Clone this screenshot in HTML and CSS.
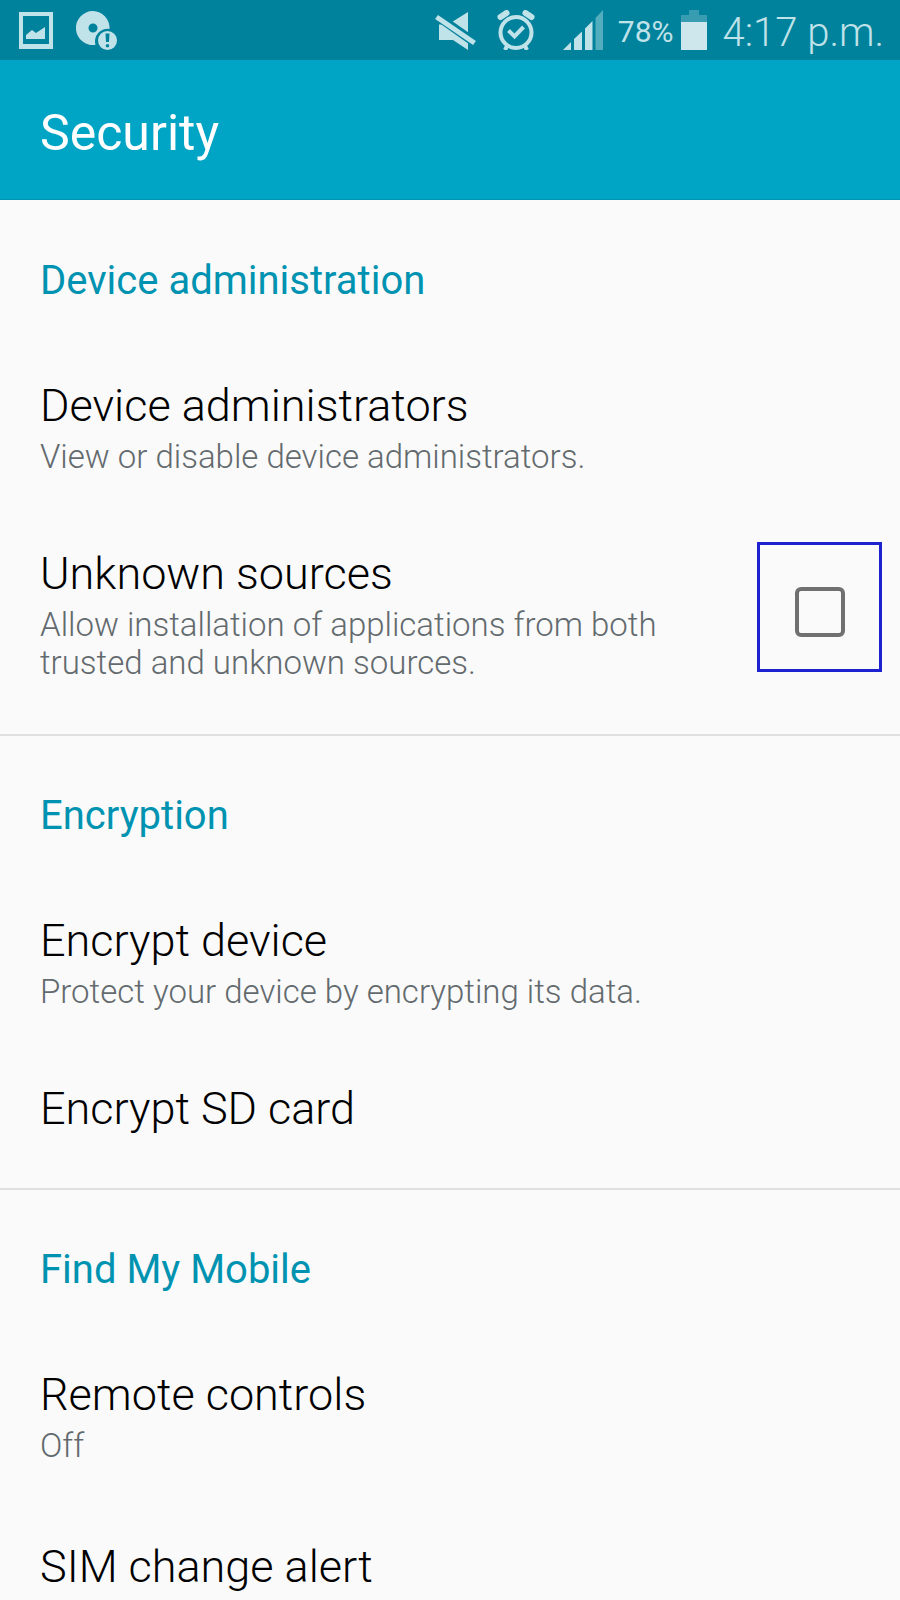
FILE: index.html
```html
<!DOCTYPE html>
<html lang="en">
<head>
<meta charset="utf-8">
<meta name="viewport" content="width=device-width, initial-scale=1">
<title>Security</title>
<link rel="stylesheet" href="styles.css">
</head>
<body>
<div class="status-bar">
  <div class="status-group notifications">
    <svg class="icon" width="34" height="38" viewBox="0 0 34 38" aria-hidden="true">
      <path fill-rule="evenodd" d="M0 1H34V38H0ZM4 5V33H30V5Z"/>
      <path d="M7 28V24L13 19L17 22L26 16V28Z"/>
    </svg>
    <svg class="icon" width="42" height="40" viewBox="0 0 42 40" aria-hidden="true">
      <path fill-rule="evenodd" d="M17 1A17 17 0 0 1 33.500 19A12.500 12.500 0 0 0 19.500 34.800A17 17 0 1 1 17 1ZM17 13.500A4.500 4.500 0 1 0 17 22.500A4.500 4.500 0 1 0 17 13.500Z"/>
      <path fill-rule="evenodd" d="M31.500 21A9.500 9.500 0 1 1 31.500 40A9.500 9.500 0 1 1 31.500 21ZM29.500 23.500L30 32H33L33.500 23.500ZM31.500 34A1.800 1.800 0 1 0 31.500 37.600A1.800 1.800 0 1 0 31.500 34Z"/>
    </svg>
  </div>
  <div class="status-group system">
    <svg class="icon" width="42" height="40" viewBox="0 0 42 40" aria-hidden="true">
      <path d="M4 14.500H8L33 31V40L18 30H4ZM17 12L33 2V25Z"/>
      <path class="cut" d="M2 6L39 32"/>
      <path class="slash" d="M1.500 7L39.500 33"/>
    </svg>
    <svg class="icon alarm" width="38" height="40" viewBox="0 0 38 40" aria-hidden="true">
      <circle class="line" cx="19" cy="22.500" r="15.500"/>
      <path class="check" d="M11.500 20.500L17.500 26.500L26.500 17"/>
      <path class="bell" d="M3.500 7L9.500 3M34.500 7L28.500 3"/>
      <path class="line" d="M10 36L8 40M28 36L30 40"/>
    </svg>
    <svg class="icon signal" width="40" height="40" viewBox="0 0 40 40" aria-hidden="true">
      <path d="M0 40L8 32V40ZM11 29L19 21.500V40H11ZM22 18.500L29.500 11V40H22Z"/>
      <path class="dim" d="M32.500 8L40 0V40H32.500Z"/>
    </svg>
    <span class="battery-level">78%</span>
    <svg class="icon battery" width="26" height="40" viewBox="0 0 26 40" aria-hidden="true">
      <path class="empty" d="M8 0H18V5H26V12H0V5H8Z"/>
      <path class="charge" d="M0 12H26V40H0Z"/>
    </svg>
    <time class="clock">4:17 p.m.</time>
  </div>
</div>
<header class="app-bar"><h1 class="title">Security</h1></header>
<main class="settings">
  <section class="group">
    <h2 class="group-title">Device administration</h2>
    <div class="item">
      <div class="item-text">
        <h3 class="item-title">Device administrators</h3>
        <p class="summary">View or disable device administrators.</p>
      </div>
    </div>
    <label class="item" for="unknown-sources">
      <span class="item-text">
        <span class="item-title">Unknown sources</span>
        <span class="summary">Allow installation of applications from both trusted and unknown sources.</span>
      </span>
      <span class="check-holder"><input class="checkbox" type="checkbox" id="unknown-sources"></span>
    </label>
  </section>
  <section class="group">
    <h2 class="group-title">Encryption</h2>
    <div class="item">
      <div class="item-text">
        <h3 class="item-title">Encrypt device</h3>
        <p class="summary">Protect your device by encrypting its data.</p>
      </div>
    </div>
    <div class="item">
      <div class="item-text"><h3 class="item-title">Encrypt SD card</h3></div>
    </div>
  </section>
  <section class="group">
    <h2 class="group-title">Find My Mobile</h2>
    <div class="item">
      <div class="item-text">
        <h3 class="item-title">Remote controls</h3>
        <p class="summary">Off</p>
      </div>
    </div>
    <div class="item item-spaced">
      <div class="item-text"><h3 class="item-title">SIM change alert</h3></div>
    </div>
  </section>
</main>
</body>
</html>
```
FILE: styles.css
```css
* { box-sizing: border-box; }

html { height: 100%; overflow: hidden; }

body {
  margin: 0;
  height: 100%;
  overflow: hidden;
  background: #fafafa;
  color: #000;
  font-family: Roboto, "Noto Sans", sans-serif;
  font-weight: 300;
  font-synthesis: none;
}

h1, h2, h3, p { margin: 0; font-weight: inherit; }

.status-bar {
  display: flex;
  justify-content: space-between;
  align-items: center;
  height: 60px;
  padding: 0 16px 0 19px;
  background: #00829c;
  color: #c0e2e9;
}

.status-group { display: flex; align-items: center; }
.notifications { gap: 23px; }

.icon { display: block; flex: none; fill: #c0e2e9; }
.icon .cut { fill: none; stroke: #00829c; stroke-width: 9; }
.icon .slash { fill: none; stroke: #c0e2e9; stroke-width: 5; }
.icon .line { fill: none; stroke: #c0e2e9; stroke-width: 4; }
.icon .check { fill: none; stroke: #c0e2e9; stroke-width: 4; }
.icon .bell { fill: none; stroke: #c0e2e9; stroke-width: 6; stroke-linecap: round; }
.icon .dim { fill: #52adbe; }
.icon .empty { fill: #389db1; }
.icon .charge { fill: #cde7ec; }

.alarm { margin-left: 20px; }
.signal { margin-left: 28px; }
.battery-level { margin-left: 15px; padding-top: 4px; font-size: 30px; font-weight: 400; line-height: 40px; }
.battery { margin-left: 8px; }
.clock { margin-left: 15px; padding-top: 6px; font-size: 40px; line-height: 48px; }

.app-bar {
  display: flex;
  align-items: center;
  height: 140px;
  padding: 6px 40px 0;
  background: #00a4c5;
  border-bottom: 1px solid #0095b3;
  color: #fff;
}

.title { font-size: 50px; font-weight: 400; line-height: 60px; }

.group { padding: 56px 0 17px; }
.group:first-child { padding-top: 57px; }
.group + .group { border-top: 2px solid #e0e0e0; }

.group-title {
  padding: 0 40px 38px;
  color: #0093b1;
  font-size: 40px;
  font-weight: 400;
  line-height: 48px;
}

.item {
  display: flex;
  align-items: center;
  gap: 56px;
  padding: 36px 55px 35px 40px;
}

.item-spaced { padding-top: 40px; }

.item-text { display: flex; flex: 1; flex-direction: column; gap: 5px; }
.item-title { font-size: 45px; line-height: 54px; }
.summary { color: #636a6e; font-size: 33px; line-height: 38px; }

.check-holder { position: relative; flex: none; width: 50px; height: 50px; margin-bottom: 6px; }

/* Highlight frame drawn over the row */
.check-holder::before {
  content: "";
  position: absolute;
  inset: -45px -37px -35px -38px;
  border: 3px solid #1c22d0;
}

.checkbox {
  display: block;
  appearance: none;
  width: 50px;
  height: 50px;
  margin: 0;
  border: 4px solid #707070;
  border-radius: 6px;
}

.checkbox:checked { background: #0093b1; }
```
